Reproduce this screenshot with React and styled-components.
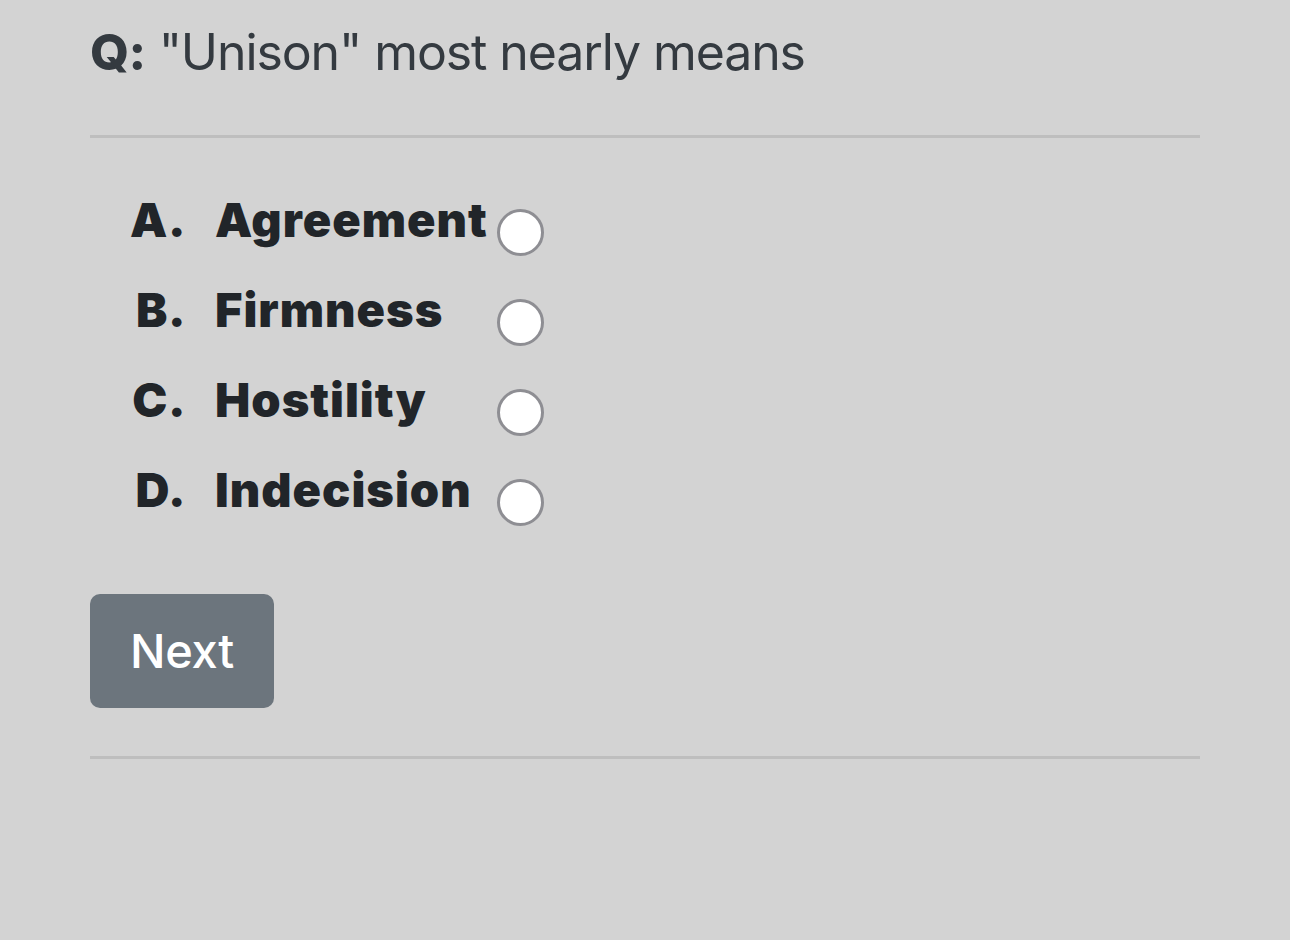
import React from "react";
import styled, { createGlobalStyle } from "styled-components";

const GlobalStyle = createGlobalStyle`
  html, body {
    margin: 0;
    padding: 0;
    background: #d3d3d3;
    font-family: Inter, "Liberation Sans", sans-serif;
  }
`;

const Page = styled.div`
  min-height: 940px;
  background: #d3d3d3;
`;

const Container = styled.div`
  max-width: 1140px;
  margin: 0 auto;
  padding: 22px 15px 0;
  box-sizing: border-box;
`;

const Question = styled.h2`
  margin: 0;
  font-size: 50px;
  line-height: 60px;
  font-weight: 400;
  color: #343a40;
  letter-spacing: -1.1px;

  b {
    font-weight: 800;
    letter-spacing: -0.5px;
  }
`;

const Divider = styled.hr`
  border: 0;
  height: 3px;
  background: #bebebe;
  margin: ${(p) => p.$top}px 0 0;
`;

const OptionList = styled.div`
  display: grid;
  grid-template-columns: 125px max-content 48px;
  align-items: center;
  margin-top: 37px;
  color: #212529;
  font-size: 47px;
  line-height: 90px;
  font-weight: 900;
  letter-spacing: 1px;
`;

const Marker = styled.span`
  text-align: right;
  padding-right: 29px;
  letter-spacing: 0.5px;
`;

const OptionText = styled.span`
  padding-right: 9px;
`;

const Radio = styled.input.attrs({ type: "radio", name: "answer" })`
  appearance: none;
  -webkit-appearance: none;
  width: 47px;
  height: 47px;
  margin: 24px 0 0;
  box-sizing: border-box;
  border: 3px solid #8e8e93;
  border-radius: 50%;
  background: #fff;
  cursor: pointer;

  &:checked {
    border-color: #007aff;
    border-width: 14px;
  }
`;

const NextButton = styled.button`
  display: inline-block;
  margin-top: 59px;
  padding: 21px 40px;
  border: 0;
  border-radius: 10px;
  background: #6c757d;
  color: #fff;
  font-family: Inter, "Liberation Sans", sans-serif;
  font-size: 47px;
  line-height: 72px;
  font-weight: 500;
  letter-spacing: -0.3px;
  cursor: pointer;
`;

const options = [
  { key: "A", text: "Agreement" },
  { key: "B", text: "Firmness" },
  { key: "C", text: "Hostility" },
  { key: "D", text: "Indecision" },
];

export default function App() {
  return (
    <Page>
      <GlobalStyle />
      <Container>
        <Question>
          <b>Q:</b> "Unison" most nearly means
        </Question>
        <Divider $top={53} />
        <OptionList>
          {options.map((o) => (
            <React.Fragment key={o.key}>
              <Marker>{o.key}.</Marker>
              <OptionText>{o.text}</OptionText>
              <Radio value={o.key} />
            </React.Fragment>
          ))}
        </OptionList>
        <NextButton>Next</NextButton>
        <Divider $top={48} />
      </Container>
    </Page>
  );
}
